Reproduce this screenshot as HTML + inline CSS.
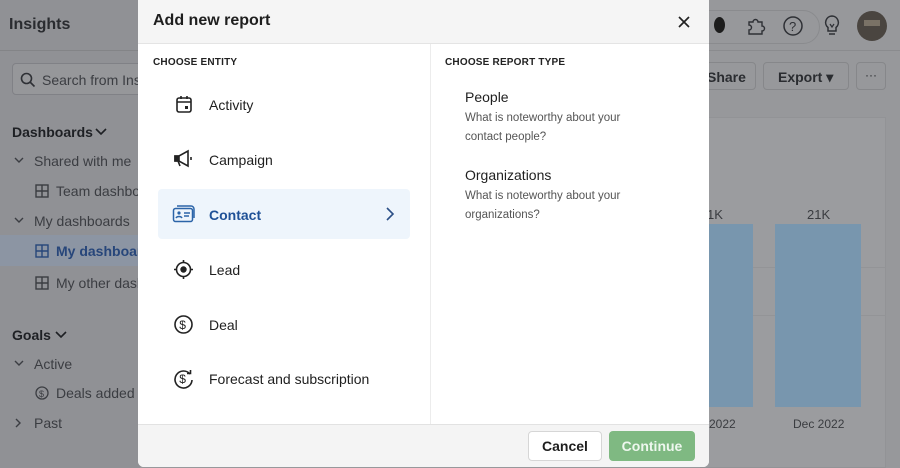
<!DOCTYPE html>
<html><head><meta charset="utf-8"><style>
*{box-sizing:border-box;margin:0;padding:0}
body{width:900px;height:468px;overflow:hidden;font-family:"Liberation Sans",Arial,sans-serif;background:#97989b;position:relative;color:#1b1b1b}
.abs{position:absolute}
.sb{left:0;top:0;width:140px;height:468px;background:#909195}
.st{color:#2e3035;font-size:14px}
.g{color:#3b3d42}
.modal{left:138px;top:0;width:571px;height:467px;background:#fff;border-radius:0 0 6px 6px;overflow:hidden}
.hdr{left:0;top:0;width:571px;height:44px;background:#f5f5f5;border-bottom:1px solid #e4e4e4}
.ft{left:0;top:424px;width:571px;height:44px;background:#f4f4f4;border-top:1px solid #e2e2e2}
.cap{font-size:10px;font-weight:bold;letter-spacing:.2px;color:#222}
.item{font-size:14px;color:#1f1f1f}
svg{position:absolute}
</style></head><body>
<div class="abs sb"></div>
<div class="abs" style="left:0;top:50px;width:140px;height:1px;background:#838487"></div>
<div class="abs st" style="left:9px;top:16px;font-size:16px;font-weight:bold;color:#2a2c30">Insights</div>
<div class="abs" style="left:12px;top:63px;width:140px;height:32px;border:1px solid #808186;border-radius:4px;background:#96979a"></div>
<svg style="left:20px;top:72px" width="16" height="16" viewBox="0 0 16 16"><circle cx="6.5" cy="6.5" r="5" fill="none" stroke="#2e3035" stroke-width="1.6"/><path d="M10 10l4.5 4.5" stroke="#2e3035" stroke-width="1.6"/></svg>
<div class="abs st g" style="left:42px;top:72px">Search from Ins</div>
<div class="abs st" style="left:12px;top:124px;font-weight:bold;color:#1e2024">Dashboards</div>
<svg style="left:94px;top:127px" width="14" height="10"><path d="M2 2l5 5 5-5" fill="none" stroke="#1e2024" stroke-width="1.6"/></svg>
<svg style="left:14px;top:157px" width="10" height="8"><path d="M1 1l4 4 4-4" fill="none" stroke="#3b3d42" stroke-width="1.4"/></svg>
<div class="abs st g" style="left:34px;top:153px">Shared with me</div>
<svg style="left:35px;top:184px" width="14" height="14"><rect x="1" y="1" width="12" height="12" fill="none" stroke="#3b3d42" stroke-width="1.4"/><path d="M7 1v12M1 7h12" stroke="#3b3d42" stroke-width="1.4"/></svg>
<div class="abs st g" style="left:56px;top:183px">Team dashbo</div>
<svg style="left:14px;top:217px" width="10" height="8"><path d="M1 1l4 4 4-4" fill="none" stroke="#3b3d42" stroke-width="1.4"/></svg>
<div class="abs st g" style="left:34px;top:213px">My dashboards</div>
<div class="abs" style="left:0;top:235px;width:140px;height:31px;background:#8c95a3"></div>
<svg style="left:35px;top:244px" width="14" height="14"><rect x="1" y="1" width="12" height="12" fill="none" stroke="#27467a" stroke-width="1.4"/><path d="M7 1v12M1 7h12" stroke="#27467a" stroke-width="1.4"/></svg>
<div class="abs st" style="left:56px;top:243px;color:#27467a;font-weight:bold">My dashboar</div>
<svg style="left:35px;top:276px" width="14" height="14"><rect x="1" y="1" width="12" height="12" fill="none" stroke="#3b3d42" stroke-width="1.4"/><path d="M7 1v12M1 7h12" stroke="#3b3d42" stroke-width="1.4"/></svg>
<div class="abs st g" style="left:56px;top:275px">My other dash</div>
<div class="abs st" style="left:12px;top:327px;font-weight:bold;color:#1e2024">Goals</div>
<svg style="left:54px;top:330px" width="14" height="10"><path d="M2 2l5 5 5-5" fill="none" stroke="#1e2024" stroke-width="1.6"/></svg>
<svg style="left:14px;top:360px" width="10" height="8"><path d="M1 1l4 4 4-4" fill="none" stroke="#3b3d42" stroke-width="1.4"/></svg>
<div class="abs st g" style="left:34px;top:356px">Active</div>
<svg style="left:35px;top:386px" width="14" height="14"><circle cx="7" cy="7" r="6" fill="none" stroke="#3b3d42" stroke-width="1.3"/><text x="4" y="11" font-size="9" font-family="Liberation Sans" fill="#3b3d42">$</text></svg>
<div class="abs st g" style="left:56px;top:385px">Deals added</div>
<svg style="left:15px;top:418px" width="8" height="10"><path d="M1 1l4 4-4 4" fill="none" stroke="#3b3d42" stroke-width="1.4"/></svg>
<div class="abs st g" style="left:34px;top:415px">Past</div>
<!-- right bg -->
<div class="abs" style="left:700px;top:50px;width:200px;height:1px;background:#8a8b8e"></div>
<div class="abs" style="left:690px;top:10px;width:130px;height:34px;border:1px solid #8a8b8e;border-radius:17px"></div>
<div class="abs" style="left:714px;top:17px;width:11px;height:16px;border-radius:50%;background:#1d1d1d"></div>
<svg style="left:745px;top:14px" width="22" height="22" viewBox="0 0 22 22"><path d="M4 8h4a2.5 2.5 0 1 1 5 0h4v4a2.5 2.5 0 1 1 0 5v3H4v-4a2.5 2.5 0 1 0 0-5z" fill="none" stroke="#2e3035" stroke-width="1.4"/></svg>
<svg style="left:782px;top:15px" width="22" height="22"><circle cx="11" cy="11" r="9" fill="none" stroke="#2e3035" stroke-width="1.5"/><text x="7" y="16" font-size="13" font-family="Liberation Sans" fill="#2e3035">?</text></svg>
<svg style="left:823px;top:14px" width="18" height="24" viewBox="0 0 18 24"><path d="M9 2a6.5 6.5 0 0 0-4 11.5V17h8v-3.5A6.5 6.5 0 0 0 9 2zM6 20h6" fill="none" stroke="#2e3035" stroke-width="1.5"/><path d="M7 10l2 3 2-3" fill="none" stroke="#2e3035" stroke-width="1.2"/></svg>
<div class="abs" style="left:857px;top:11px;width:30px;height:30px;border-radius:50%;background:#4a4540;overflow:hidden"><div style="margin:9px 0 0 7px;width:16px;height:6px;background:#7a7266"></div></div>
<div class="abs" style="left:700px;top:62px;width:56px;height:28px;border:1px solid #86878a;border-radius:4px;font-size:14px;font-weight:bold;color:#2a2c30;padding:6px 0 0 6px">Share</div>
<div class="abs" style="left:763px;top:62px;width:86px;height:28px;border:1px solid #86878a;border-radius:4px;font-size:14px;font-weight:bold;color:#2a2c30;padding:6px 0 0 14px">Export ▾</div>
<div class="abs" style="left:856px;top:62px;width:30px;height:28px;border:1px solid #86878a;border-radius:4px;font-size:12px;color:#2a2c30;padding:5px 0 0 8px">···</div>
<div class="abs" style="left:700px;top:117px;width:186px;height:351px;background:#9b9c9f;border:1px solid #929396"></div>
<div class="abs" style="left:700px;top:267px;width:186px;height:1px;background:#939497"></div>
<div class="abs" style="left:700px;top:315px;width:186px;height:1px;background:#939497"></div>
<div class="abs" style="left:700px;top:224px;width:53px;height:183px;background:#7896ae"></div>
<div class="abs" style="left:775px;top:224px;width:86px;height:183px;background:#7896ae"></div>
<div class="abs" style="left:707px;top:207px;font-size:13px;color:#3a3c40">1K</div>
<div class="abs" style="left:807px;top:207px;font-size:13px;color:#3a3c40">21K</div>
<div class="abs" style="left:709px;top:417px;font-size:12px;color:#3a3c40">2022</div>
<div class="abs" style="left:793px;top:417px;font-size:12px;color:#3a3c40">Dec 2022</div>
<!-- modal -->
<div class="abs modal">
<div class="abs hdr"></div>
<div class="abs" style="left:15px;top:12px;font-size:16px;font-weight:bold;color:#1e1e1e">Add new report</div>
<svg style="left:539px;top:15px" width="14" height="14"><path d="M2 2l10 10M12 2L2 12" stroke="#222" stroke-width="1.7"/></svg>
<div class="abs" style="left:292px;top:44px;width:1px;height:380px;background:#ececec"></div>
<div class="abs cap" style="left:15px;top:57px">CHOOSE ENTITY</div>
<div class="abs cap" style="left:307px;top:57px">CHOOSE REPORT TYPE</div>
<div class="abs" style="left:20px;top:189px;width:252px;height:50px;background:#eef5fc;border-radius:4px"></div>
<svg style="left:36px;top:94px" width="20" height="20" viewBox="0 0 20 20"><rect x="3" y="4" width="14" height="14" rx="2" fill="none" stroke="#222" stroke-width="1.6"/><path d="M3 8h14M7 2v3M13 2v3" stroke="#222" stroke-width="1.6"/><rect x="11" y="12" width="3" height="3" fill="#222"/></svg>
<div class="abs item" style="left:71px;top:97px">Activity</div>
<svg style="left:35px;top:149px" width="22" height="20" viewBox="0 0 22 20"><path d="M2 7h4l9-5v15l-9-5H2z" fill="none" stroke="#222" stroke-width="1.6"/><path d="M2 7h4v5H2z M5 12l2 5" fill="#222" stroke="#222" stroke-width="1.6"/><path d="M18 8v3" stroke="#222" stroke-width="1.6"/></svg>
<div class="abs item" style="left:71px;top:152px">Campaign</div>
<svg style="left:34px;top:204px" width="24" height="20" viewBox="0 0 24 20"><rect x="1.5" y="4.5" width="19" height="13" rx="2" fill="none" stroke="#2b64a8" stroke-width="1.5"/><path d="M5 2h14a3 3 0 0 1 3 3v9" fill="none" stroke="#2b64a8" stroke-width="1.5"/><circle cx="7" cy="9" r="1.6" fill="#2b64a8"/><path d="M4 14c1-2 5-2 6 0M12 9h6M12 12h5" stroke="#2b64a8" stroke-width="1.5" fill="none"/></svg>
<div class="abs item" style="left:71px;top:207px;color:#1f5197;font-weight:bold">Contact</div>
<svg style="left:247px;top:207px" width="10" height="14"><path d="M2 1l6 6-6 6" fill="none" stroke="#2b4f86" stroke-width="1.6"/></svg>
<svg style="left:35px;top:259px" width="21" height="21" viewBox="0 0 21 21"><circle cx="10.5" cy="10.5" r="7" fill="none" stroke="#222" stroke-width="1.6"/><circle cx="10.5" cy="10.5" r="3.2" fill="#222"/><path d="M10.5 1v2.5M10.5 17.5V20M1 10.5h2.5M17.5 10.5H20" stroke="#222" stroke-width="1.6"/></svg>
<div class="abs item" style="left:71px;top:262px">Lead</div>
<svg style="left:35px;top:314px" width="21" height="21" viewBox="0 0 21 21"><circle cx="10.5" cy="10.5" r="8.5" fill="none" stroke="#222" stroke-width="1.6"/><text x="6.3" y="15" font-size="12" font-family="Liberation Sans" fill="#222">$</text></svg>
<div class="abs item" style="left:71px;top:317px">Deal</div>
<svg style="left:35px;top:368px" width="21" height="21" viewBox="0 0 21 21"><path d="M17 6A8.5 8.5 0 1 0 19 12" fill="none" stroke="#222" stroke-width="1.6"/><path d="M14 5.5h3.5V2" fill="none" stroke="#222" stroke-width="1.6"/><text x="6.3" y="15" font-size="12" font-family="Liberation Sans" fill="#222">$</text></svg>
<div class="abs item" style="left:71px;top:371px">Forecast and subscription</div>
<div class="abs" style="left:327px;top:89px;font-size:14px;color:#1f1f1f">People</div>
<div class="abs" style="left:327px;top:109px;font-size:11.5px;line-height:19px;color:#555">What is noteworthy about your<br>contact people?</div>
<div class="abs" style="left:327px;top:167px;font-size:14px;color:#1f1f1f">Organizations</div>
<div class="abs" style="left:327px;top:187px;font-size:11.5px;line-height:19px;color:#555">What is noteworthy about your<br>organizations?</div>
<div class="abs ft"></div>
<div class="abs" style="left:390px;top:431px;width:74px;height:30px;background:#fff;border:1px solid #d6d6d6;border-radius:4px;font-size:14px;font-weight:bold;color:#1e1e1e;text-align:center;line-height:28px">Cancel</div>
<div class="abs" style="left:471px;top:431px;width:86px;height:30px;background:#7fb982;border-radius:4px;font-size:14px;font-weight:bold;color:#eef7ee;text-align:center;line-height:30px">Continue</div>
</div>
</body></html>
